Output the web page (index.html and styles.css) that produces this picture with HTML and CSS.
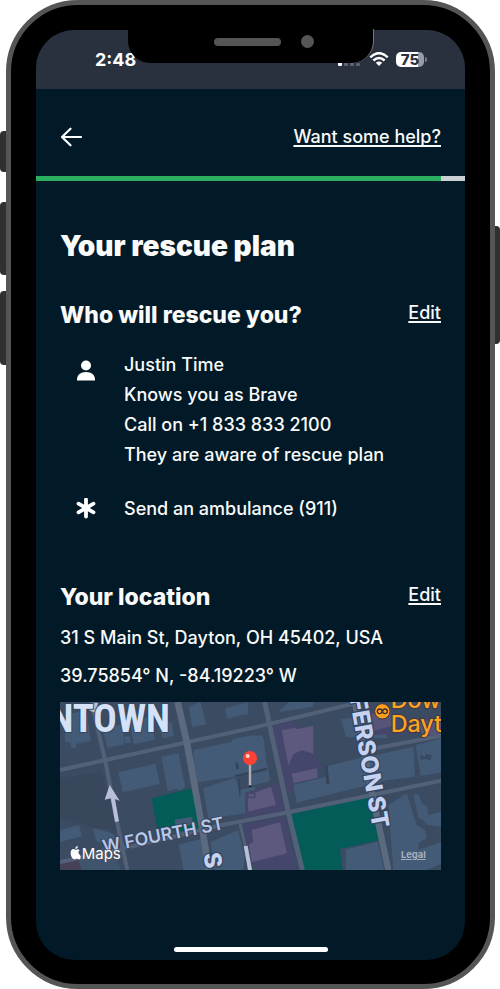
FILE: index.html
```html
<!DOCTYPE html>
<html lang="en">
<head>
<meta charset="utf-8">
<meta name="viewport" content="width=device-width, initial-scale=1">
<title>Your rescue plan</title>
<link rel="stylesheet" href="styles.css">
</head>
<body>
<div class="device">
  <span class="key key-mute"></span>
  <span class="key key-up"></span>
  <span class="key key-down"></span>
  <span class="key key-power"></span>
  <div class="bezel">
    <div class="notch"><span class="speaker"></span><span class="camera"></span></div>
    <div class="screen">
      <div class="status">
        <span class="time">2:48</span>
        <div class="indicators">
          <svg class="signal" width="24" height="16" viewBox="0 0 24 16" aria-hidden="true">
            <rect x="0" y="9" width="4" height="5" rx="1" fill="#fff"/>
            <g fill="#5b6573"><rect x="6" y="7" width="4" height="7" rx="1"/><rect x="12" y="7" width="4" height="7" rx="1"/><rect x="18" y="11" width="4" height="3" rx="1"/></g>
          </svg>
          <svg width="20" height="16" viewBox="0 0 20 16" aria-hidden="true">
            <g fill="none" stroke="#fff" stroke-width="2.5"><path d="M1.3 5.3Q10-3 18.7 5.3"/><path d="M4.4 8.5Q10 3.4 15.6 8.500"/></g>
            <path d="M6.8 10.8Q10 8.2 13.2 10.8L10 14Z" fill="#fff"/>
          </svg>
          <div class="battery"><span class="cell">75</span><span class="tip"></span></div>
        </div>
      </div>
      <header class="topbar">
        <button class="back" type="button" aria-label="Back">
          <svg width="22" height="20" viewBox="0 0 22 20" aria-hidden="true"><path d="M21 10H2M10.500 1.700L2 10L10.500 18.300" fill="none" stroke="#fff" stroke-width="2.200" stroke-linecap="round" stroke-linejoin="round"/></svg>
        </button>
        <a class="link" href="#help">Want some help?</a>
      </header>
      <div class="progress" role="progressbar" aria-label="Plan progress" aria-valuenow="94" aria-valuemin="0" aria-valuemax="100"><div class="bar" style="width:94.4%"></div></div>
      <main>
        <h1>Your rescue plan</h1>
        <section class="rescuer">
          <div class="heading"><h2>Who will rescue you?</h2><a class="link" href="#edit-rescuer">Edit</a></div>
          <div class="entry">
            <svg class="icon person" width="20" height="22" viewBox="0 0 20 22" aria-hidden="true"><circle cx="10" cy="5.500" r="5" fill="#fff"/><path d="M1 20.500V19.500C1 15 4.500 12 10 12S19 15 19 19.500V20.500Z" fill="#fff"/></svg>
            <div><p>Justin Time</p><p>Knows you as Brave</p><p>Call on +1 833 833 2100</p><p>They are aware of rescue plan</p></div>
          </div>
          <div class="entry">
            <svg class="icon" width="20" height="22" viewBox="0 0 20 22" aria-hidden="true"><path d="M10 1.500V18.500M2.500 5.700L17.500 14.300M17.500 5.700L2.500 14.300" stroke="#fff" stroke-width="3.800" stroke-linecap="round"/></svg>
            <p>Send an ambulance (911)</p>
          </div>
        </section>
        <section>
          <div class="heading"><h2>Your location</h2><a class="link" href="#edit-location">Edit</a></div>
          <div class="address"><p>31 S Main St, Dayton, OH 45402, USA</p><p>39.75854° N, -84.19223° W</p></div>
          <svg class="map" viewBox="0 0 1143 504" role="img" aria-label="Map of downtown Dayton">
            <rect width="1143" height="504" fill="#3b4b62"/>
            <g transform="translate(-15 -21)">
              <g fill="#435b77">
                <path d="M30 60L95 45L107 137L63 147V158H48V145L30 139Z"/>
                <path d="M142 105L205 85L207 148L158 158Z M206 124H225L228 144H211Z M225 80L285 65L300 135L236 148Z M310 100L350 80L356 123L325 130Z"/>
                <path d="M401 35L436 20L454 88L412 97Z M510 40L575 22L582 55L517 71Z"/>
                <path d="M190 232L302 206L314 267L203 292Z M319 185L370 174L391 276L372 287L365 281L338 289Z"/>
                <path d="M415 165L530 140L533 132L600 120V235L540 250L535 245L418 264Z M444 280L535 250L545 255L550 285L600 275V350L460 371Z"/>
                <path d="M15 406L72 391L80 424L15 441Z M113 400L160 402L180 425L170 450L125 440Z M372 448L450 430L455 525H385Z M467 440L550 405L568 485L565 525H478Z"/>
                <path d="M70 495L160 450L200 525H60Z" opacity=".6"/>
              </g>
              <path d="M15 250L140 230L190 420L15 370Z" fill="#374558" opacity=".6"/>
              <path d="M15 504L70 494L80 525H15Z" fill="#464157"/>
              <path d="M290 310L410 280L435 402L395 409L355 405L308 408Z" fill="#035c58"/>
              <path d="M359 374L411 365L414 388L362 397Z" fill="#435b77"/>
              <path d="M566 390H600V480L585 460Z M577 310L600 293V343L585 350Z" fill="#44466b"/>
            </g>
            <g transform="translate(555 -21)">
              <g fill="#435b77">
                <path d="M100 52L132 20H205V35Z M0 22H8L10 57L0 61Z M288 73L420 55L427 130L303 126Z"/>
                <path d="M15 125L50 121L57 135L64 205L72 233L75 258L8 275L15 250Z"/>
                <path d="M145 270L242 245L240 215L380 180L408 263L330 280L155 323Z M248 213L505 155L510 245L410 258L285 285Z"/>
                <path d="M512 150L590 130V232L527 242Z M430 330L485 295L515 390L540 405L545 430L520 445V465L590 440V505L545 525H445Z M505 300L520 297L530 325L545 333L550 360L590 350V395L550 390L520 365Z"/>
                <path d="M303 463L398 440L418 525H302Z"/>
              </g>
              <g fill="#44466b">
                <path d="M82 92L145 78L158 98L205 100V180L235 220L140 245L145 290L120 300Z M0 293L100 263L120 345L0 370Z M0 387L120 362L155 525H35L0 450Z"/>
                <path d="M365 50L440 38L470 95L560 63L590 70V115L375 120Z"/>
              </g>
              <g fill="#5d587e">
                <path d="M110 106L150 98L154 103L205 92V176L170 166L145 178L130 212Z M140 236L216 220L218 248L145 265Z M8 300L78 275L93 330L10 350Z M20 405L105 382L126 475L20 502L12 450L25 440Z"/>
                <path d="M370 60L438 42L440 93L375 110Z M520 80L590 70V120L530 123Z" opacity=".8"/>
                <path d="M7 295H29V307H10Z" stroke="#44466b" stroke-width="4"/>
              </g>
              <path d="M525 180L540 186L542 176L560 180L557 198L543 191L527 195Z" fill="#374a62"/>
              <path d="M138 357L375 307L405 435L285 462L293 525H172Z" fill="#035c58"/>
              <path d="M243 213L249 267" stroke="#34455b" stroke-width="9"/>
              <path d="M-30 244L65 222" stroke="#344359" stroke-width="7"/><path d="M-18 248L-15 302" stroke="#344359" stroke-width="4"/><path d="M-25 202L-22 222" stroke="#344359" stroke-width="8"/>
            </g>
            <g fill="none" stroke="#536178" stroke-width="12">
              <path d="M94 0L135 174L175 379L202 504"/>
              <path d="M0 204L585 76L885 4"/>
              <path d="M0 480L180 442L485 369L685 331L1145 236"/>
              <path d="M614 0L685 331L727 504" stroke-width="15"/>
              <path d="M950 138L1145 101"/>
              <path d="M540 365L560 450" stroke-width="9"/>
              <path d="M885 0L935 270L985 504" stroke-width="19" stroke="#5c6a80"/>
              <path d="M353 0L380 119L425 369L447 504" stroke-width="20" stroke="#5c6a80"/>
            </g>
            <g stroke="#b8bfd9" stroke-width="12">
              <path d="M171 359L156 275"/><path d="M557 432L573 520"/>
              <path d="M149 249L179 296L156 288L134 293Z" stroke="none" fill="#b8bfd9"/>
              <path d="M87 25L96 2H114L108 34Z" stroke="none" fill="#b8bfd9"/>
            </g>
            <text class="map-district" x="330" y="90" text-anchor="end">NTOWN</text>
            <text class="map-road" transform="translate(131 452) rotate(-11)">W FOURTH ST</text>
            <text class="map-avenue" transform="translate(430 456) rotate(80)">S</text>
            <text class="map-avenue" transform="translate(938 381) rotate(80)" text-anchor="end">FERSON ST</text>
            <g class="map-place"><text x="992" y="17">Downtown</text><text x="992" y="90">Dayton</text></g>
            <circle cx="967" cy="28" r="23" fill="#ff9f1c" stroke="#3c3838" stroke-width="3"/>
            <g fill="none" stroke="#392f38" stroke-width="4"><circle cx="959" cy="28" r="7"/><circle cx="975" cy="28" r="7"/></g>
            <path d="M570 187V252" stroke="#6f747c" stroke-width="9"/><path d="M570 187V252" stroke="#b8babe" stroke-width="5"/>
            <ellipse cx="570" cy="253" rx="5" ry="3" fill="#18222e"/>
            <circle cx="570" cy="168" r="21" fill="#ff4034"/><circle cx="563" cy="162" r="6" fill="#ffd7d2"/>
            <path d="M47 444C40 438 32 441 32 453C32 463 38 472 43 472C47 472 48 470 51 470C54 470 55 472 58 472C61 472 64 465 60 459C54 455 54 449 59 445C55 440 51 441 47 444ZM46 441C46 436 49 433 53 432C54 437 51 441 46 441Z" fill="#fff"/>
            <text class="map-brand" x="65" y="471">Maps</text>
            <text class="map-legal" x="1023" y="468">Legal</text>
          </svg>
        </section>
      </main>
      <div class="home"></div>
    </div>
  </div>
</div>
</body>
</html>
```
FILE: styles.css
```css
* { box-sizing: border-box; }
body { margin: 0; background: #fff; color: #fafafa; font: 500 18px/30px Inter, "Liberation Sans", sans-serif; }
h1, h2, p { margin: 0; }
.device { position: relative; min-height: 100vh; padding: 0 5px 0 6px; display: flex; }
.bezel { position: relative; flex: 1; display: flex; padding: 25px 25px 24px; background: #000; border: 5px solid #555; border-radius: 72px; }
.screen { flex: 1; display: flex; flex-direction: column; overflow: hidden; background: #021a27; border-radius: 38px; }
.key { position: absolute; width: 7px; left: 0; background: #303030; border-radius: 4px 0 0 4px; }
.key-mute { top: 131px; height: 41px; }
.key-up { top: 202px; height: 73px; }
.key-down { top: 291px; height: 74px; }
.key-power { top: 226px; height: 118px; left: auto; right: 0; border-radius: 0 4px 4px 0; }
.notch { position: absolute; top: 24px; left: 50%; width: 246px; height: 34px; transform: translateX(-50%); background: #000; border-right: 1px solid #777; border-radius: 0 0 22px 22px; z-index: 1; }
.speaker { position: absolute; left: 86px; top: 9px; width: 67px; height: 8px; border-radius: 4px; background: #555; }
.camera { position: absolute; left: 173px; top: 6px; width: 13px; height: 13px; border-radius: 50%; background: #555; }
.status { display: flex; justify-content: space-between; align-items: center; height: 59px; padding: 0 38px 0 59px; background: #29313f; }
.time { font-size: 18px; font-weight: 700; color: #fff; }
.indicators { display: flex; align-items: center; gap: 7px; }
.battery { display: flex; align-items: center; gap: 1px; }
.cell { width: 28px; height: 15px; border-radius: 5px; background: linear-gradient(90deg, #fff 78%, #979ca5 78%); color: #29313f; font-size: 15px; font-weight: 800; line-height: 15px; text-align: center; }
.tip { width: 2px; height: 5px; border-radius: 0 2px 2px 0; background: #777f89; }
.topbar { display: flex; align-items: center; justify-content: space-between; height: 87px; padding: 8px 24px 0 24px; }
.back { display: flex; padding: 0; border: 0; background: none; cursor: pointer; }
.link { color: inherit; text-decoration: underline; text-decoration-thickness: 2px; text-underline-offset: 2px; text-decoration-skip-ink: none; }
.progress { height: 5px; background: #c8d0d3; }
.bar { height: 100%; background: #2bae5f; }
main { padding: 48px 24px 0 24px; }
h1 { font-size: 28px; line-height: 34px; font-weight: 900; }
h2 { font-size: 23px; line-height: 30px; font-weight: 800; }
.rescuer { margin: 37px 0 58px; }
.heading { display: flex; justify-content: space-between; align-items: flex-start; }
.heading .link { line-height: 26px; }
.entry { display: flex; gap: 28px; padding-left: 16px; margin-top: 20px; }
.entry + .entry { margin-top: 24px; }
.icon { flex: none; margin-top: 4px; }
.person { margin-top: 10px; }
.address { display: grid; gap: 8px; margin: 11px 0; }
.map { display: block; width: 100%; overflow: hidden; }
.map-district { font: 700 117px "Liberation Sans Narrow", "Roboto Condensed", sans-serif; fill: #d5e1f6; stroke: #364860; stroke-width: 6px; paint-order: stroke; }
.map-road { font: 600 53px Inter, sans-serif; fill: #bac7e7; stroke: #35465f; stroke-width: 6px; paint-order: stroke; }
.map-avenue { font: 800 71px Inter, sans-serif; fill: #c5d2f2; stroke: #35465f; stroke-width: 8px; paint-order: stroke; }
.map-place { font: 500 70px Inter, sans-serif; fill: #ffa31f; stroke: #3c3b45; stroke-width: 6px; paint-order: stroke; }
.map-brand { font: 400 45px Inter, sans-serif; fill: #fff; stroke: #4b5361; stroke-width: 4px; paint-order: stroke; }
.map-legal { font: 700 28px Inter, sans-serif; fill: #a8b1bf; text-decoration: underline; }
.home { width: 154px; height: 5px; margin: auto auto 8px; border-radius: 3px; background: #fff; }
```
